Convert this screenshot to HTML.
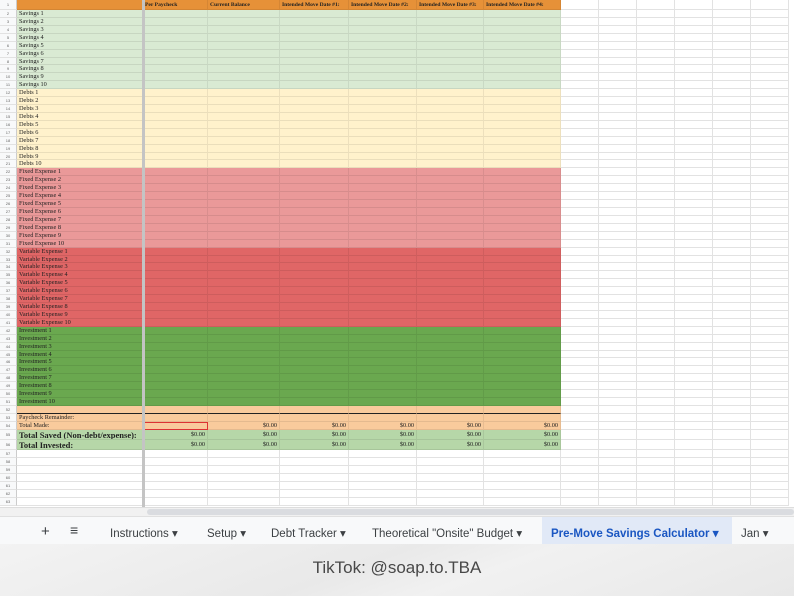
<!DOCTYPE html>
<html><head><meta charset="utf-8"><style>
*{margin:0;padding:0;box-sizing:border-box}
body{width:794px;height:596px;overflow:hidden;background:#fff;position:relative;font-family:"Liberation Serif",serif}
.r{position:absolute;left:0;width:794px}
.c{position:absolute;top:0;bottom:0;border-right:1px solid rgba(0,0,0,0.07);border-bottom:1px solid rgba(0,0,0,0.08);font-size:6.3px;padding-left:2px;white-space:nowrap;overflow:hidden;color:#222}
.n{position:absolute;left:0;top:0;bottom:0;width:17px;background:#f8f9fa;border-right:1px solid #ccc;border-bottom:1px solid #e2e2e2;font-family:"Liberation Sans",sans-serif;font-size:4px;color:#666;text-align:center}
#frz{position:absolute;left:142px;top:0;width:3px;height:514px;background:#c4c4c4}
#sb{position:absolute;left:0;top:507px;width:794px;height:9px;background:#f1f1f1;border-top:1px solid #ddd}
#sb div{position:absolute;left:147px;top:1px;width:647px;height:6px;background:#dadce0;border-radius:3px}
#tabs{position:absolute;left:0;top:516px;width:794px;height:28px;background:#f8f9fa;border-top:1px solid #e0e0e0;font-family:"Liberation Sans",sans-serif;font-size:11.5px;color:#3c4043}
#tabs span{position:absolute;top:9px}
#act{position:absolute;left:542px;top:0;width:190px;height:28px;background:#e1e9f7}
#bot{position:absolute;left:0;top:544px;width:794px;height:52px;background:linear-gradient(160deg,#f3f3f3,#e9e9e9 45%,#f1f1f1 60%,#e8e8e8);font-family:"Liberation Sans",sans-serif;font-size:17px;color:#484848;text-align:center;line-height:48px}
</style></head><body>
<div id="g"></div>
<div id="frz"></div>
<div id="sb"><div></div></div>
<div id="tabs">
<span style="left:41px;font-size:15px;top:6px">+</span>
<span style="left:70px;font-size:14px;top:5px">≡</span>
<span style="left:110px">Instructions ▾</span>
<span style="left:207px">Setup ▾</span>
<span style="left:271px">Debt Tracker ▾</span>
<span style="left:372px">Theoretical "Onsite" Budget ▾</span>
<div id="act"></div>
<span style="left:551px;color:#1a56c2;font-weight:bold">Pre-Move Savings Calculator ▾</span>
<span style="left:741px">Jan ▾</span>
</div>
<div id="bot">TikTok: @soap.to.TBA</div>
<script>
var cols=[17,143,208,280,349,417,484,561,599,637,675,713,751,789,800];
var heads=["","Per Paycheck","Current Balance","Intended Move Date #1:","Intended Move Date #2:","Intended Move Date #3:","Intended Move Date #4:"];
var rows=[];
rows.push({h:10,bg:"#e69138",cells:heads,b:1});
function grp(n,name,bg){for(var i=1;i<=10;i++)rows.push({h:7.92,bg:bg,cells:[name+" "+i]});}
grp(0,"Savings","#d9ead3");grp(0,"Debts","#fff2cc");grp(0,"Fixed Expense","#ea9999");grp(0,"Variable Expense","#e06666");grp(0,"Investment","#6aa84f");
rows.push({h:7.92,bg:"#f9cb9c",cells:[""],line:1});
rows.push({h:7.92,bg:"#f9cb9c",cells:["Paycheck Remainder:"]});
rows.push({h:8.2,bg:"#f9cb9c",cells:["Total Made:","","$0.00","$0.00","$0.00","$0.00","$0.00"],red:1});
rows.push({h:10,bg:"#b6d7a8",cells:["Total Saved (Non-debt/expense):","$0.00","$0.00","$0.00","$0.00","$0.00","$0.00"],big:1});
rows.push({h:10,bg:"#b6d7a8",cells:["Total Invested:","$0.00","$0.00","$0.00","$0.00","$0.00","$0.00"],big:1});
for(var i=0;i<7;i++)rows.push({h:8,cells:[""]});
var y=0,h="";
rows.forEach(function(r,i){
 h+='<div class="r" style="top:'+y+'px;height:'+r.h+'px;"><div class="n" style="line-height:'+r.h+'px">'+(i+1)+'</div>';
 for(var c=0;c<13;c++){
  var bg=(c<7&&r.bg)?r.bg:"transparent";var t=r.cells[c]||"";
  var st='left:'+cols[c]+'px;width:'+(cols[c+1]-cols[c])+'px;background:'+bg+';line-height:'+r.h+'px;';
  if(c>=7||!r.bg)st+='border-bottom-color:#e2e2e2;border-right-color:#e2e2e2;';
  if(c>0&&t.charAt(0)=="$")st+='text-align:right;padding-right:2px;';
  if(r.b)st+='font-weight:bold;font-size:5.6px;';
  if(r.big&&c==0)st+='font-size:8.5px;font-weight:bold;';
  if(r.red&&c==1)st+='border:1px solid #d33;';
  if(r.line&&c<7)st+='border-bottom:1.5px solid #222;';
  h+='<div class="c" style="'+st+'">'+t+'</div>';
 }
 h+='</div>';y+=r.h;
});
document.getElementById("g").innerHTML=h;
</script>
</body></html>
